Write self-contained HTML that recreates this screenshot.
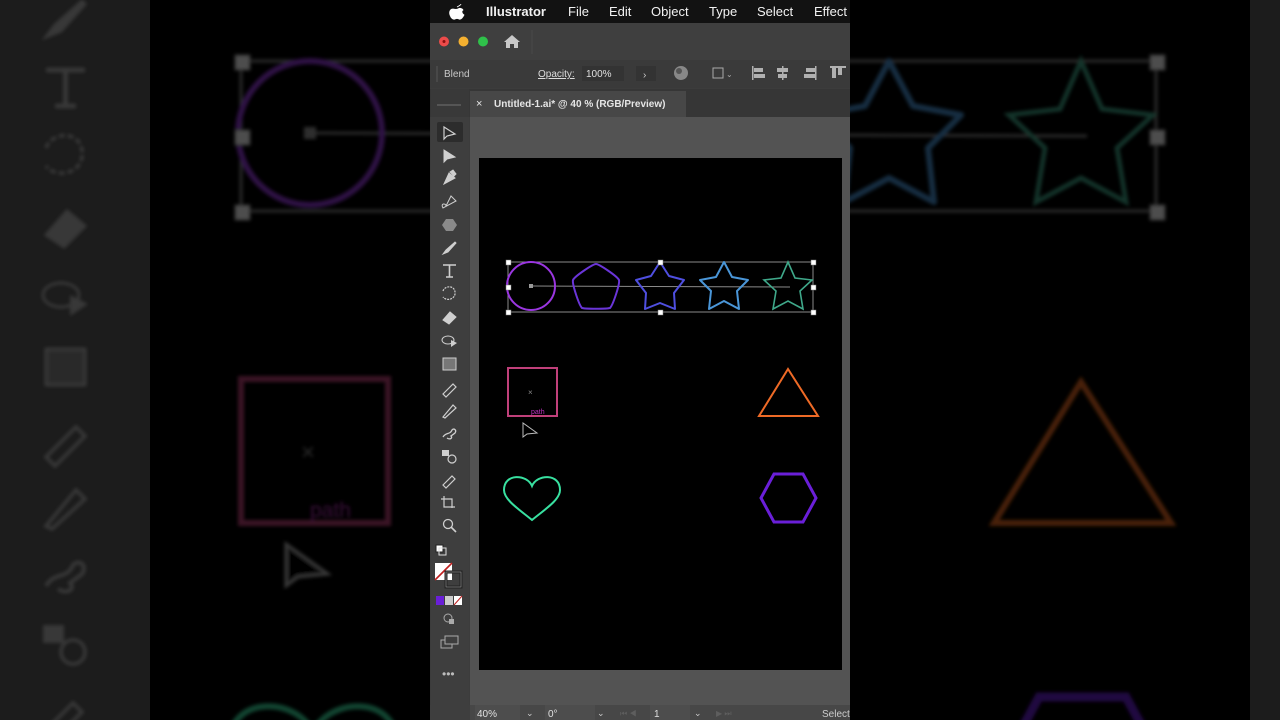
<!DOCTYPE html>
<html><head><meta charset="utf-8"><style>
html,body{margin:0;padding:0;background:#000;width:1280px;height:720px;overflow:hidden}
svg{display:block}
text{font-family:"Liberation Sans",sans-serif}
</style></head><body>
<svg width="1280" height="720" viewBox="0 0 1280 720" xmlns="http://www.w3.org/2000/svg">
<defs>
<filter id="bl" x="-10%" y="-10%" width="120%" height="120%"><feGaussianBlur stdDeviation="0.6"/></filter>
<g id="scene">
  <g stroke="#8a8a8a" stroke-width="1" fill="none">
    <rect x="508" y="262" width="305" height="50"/>
    <line x1="531" y1="286" x2="790" y2="287"/>
  </g>
  <rect x="529" y="284" width="4" height="4" fill="#9a9a9a"/>
  <circle cx="531" cy="286" r="24" fill="none" stroke="#9a36e0" stroke-width="2"/>
  <path transform="translate(596,288)" d="M0,-24 C3,-24 21,-12 23,-8 C24,-4 17,17 14,20 C10,21 -10,21 -14,20 C-17,17 -24,-4 -23,-8 C-21,-12 -3,-24 0,-24Z" fill="none" stroke="#6a35d8" stroke-width="2"/>
  <path transform="translate(660,287)" d="M0,-25 L9,-11 L24,-7 L14,6 L15,22 L0,16 L-15,22 L-14,6 L-24,-7 L-9,-11Z" fill="none" stroke="#4f4fe0" stroke-width="2" stroke-linejoin="round"/>
  <path transform="translate(724,287)" d="M0,-25 L8,-10 L24,-7 L13,4 L15,22 L0,14 L-15,22 L-13,4 L-24,-7 L-8,-10Z" fill="none" stroke="#4a96d8" stroke-width="2" stroke-linejoin="round"/>
  <path transform="translate(788,287)" d="M0,-25 L7,-9 L24,-7 L12,4 L15,22 L0,14 L-15,22 L-12,4 L-24,-7 L-7,-9Z" fill="none" stroke="#3fa88a" stroke-width="1.6"/>
  <rect x="508" y="368" width="49" height="48" fill="none" stroke="#c0407a" stroke-width="2"/>
  <text x="528" y="395" font-size="8" fill="#888">×</text>
  <text x="531" y="414" font-size="7" fill="#c030c0">path</text>
  <path d="M523,423 L523,437 L527,434 L537,433 Z" fill="#000" stroke="#bbb" stroke-width="1"/>
  <path d="M788,369 L818,416 L759,416 Z" fill="none" stroke="#ee6a26" stroke-width="2"/>
  <path d="M532,486 C527,474 504,473 504,490 C504,500 520,510 532,520 C544,510 560,500 560,490 C560,473 537,474 532,486 Z" fill="none" stroke="#38e0a0" stroke-width="2"/>
  <path d="M761,498 L774,474 L803,474 L816,498 L803,522 L774,522 Z" fill="none" stroke="#6a1fd8" stroke-width="3"/>
  <g fill="#fff" stroke="#777" stroke-width="0.5">
    <rect x="506" y="260" width="5" height="5"/><rect x="658" y="260" width="5" height="5"/><rect x="811" y="260" width="5" height="5"/>
    <rect x="506" y="285" width="5" height="5"/><rect x="811" y="285" width="5" height="5"/>
    <rect x="506" y="310" width="5" height="5"/><rect x="658" y="310" width="5" height="5"/><rect x="811" y="310" width="5" height="5"/>
  </g>
</g>
<g id="tools" fill="#cfcfcf" stroke="#cfcfcf">
  <path d="M444,127 L444,139 L447,136 L455,134 Z" fill="none" stroke-width="1.2"/>
  <path d="M444,150 L444,162 L447,159 L455,157 Z" stroke-width="1"/>
  <path d="M444,184 L449,173 L455,178 Z M450,172 L453,170 L456,174 L454,176Z" stroke-width="1"/>
  <path d="M443,208 C440,203 446,203 446,206 L451,196 L456,201 Z" stroke-width="1" fill="none"/>
  <path d="M442,225 L446,219 L453,219 L457,225 L453,231 L446,231 Z" stroke="none" fill="#8a8a8a"/>
  <path d="M443,254 L446,250 L455,242 L456,243 L448,252 Z" stroke-width="1"/>
  <path d="M443,265 L456,265 M449.5,265 L449.5,277 M446,277 L453,277" fill="none" stroke-width="1.6"/>
  <path d="M443,291 C445,285 456,285 455,294 C454,300 446,301 443,297" fill="none" stroke-width="1.2" stroke-dasharray="2 1"/>
  <path d="M443,320 L450,312 L456,317 L449,324 Z" stroke-width="1"/>
  <ellipse cx="448" cy="340" rx="6" ry="4" fill="none" stroke-width="1"/>
  <path d="M451,340 L451,347 L457,343Z" stroke="none"/>
  <rect x="443" y="358" width="13" height="12" fill="#777" stroke-width="1"/>
  <path d="M443,394 L453,384 L456,387 L446,397 Z" fill="none" stroke-width="1.2"/>
  <path d="M443,417 L453,405 L456,408 L445,418 Z" fill="none" stroke-width="1.2"/>
  <path d="M443,437 C446,432 450,435 452,430 C454,428 457,430 455,433 L451,436 C453,438 450,440 447,438" fill="none" stroke-width="1.3"/>
  <rect x="442" y="450" width="7" height="6" stroke="none"/><circle cx="452" cy="459" r="4" fill="none" stroke-width="1.2"/>
  <path d="M443,485 L452,476 L455,479 L446,488 Z" fill="none" stroke-width="1.2"/>
  <path d="M444,496 L444,507 L455,507 M441,499 L452,499 L452,508" fill="none" stroke-width="1.2"/>
  <circle cx="448" cy="524" r="4.5" fill="none" stroke-width="1.3"/><path d="M451,527 L456,532" stroke-width="1.6"/>
</g>
</defs>

<rect x="0" y="0" width="1280" height="720" fill="#000"/>
<rect x="0" y="0" width="150" height="720" fill="#1c1c1c"/>
<rect x="1250" y="0" width="30" height="720" fill="#1c1c1c"/>
<g transform="translate(-1283,-725) scale(3)" filter="url(#bl)">
  <use href="#scene" opacity="0.3"/>
  <use href="#tools" opacity="0.16"/>
</g>

<rect x="430" y="0" width="420" height="720" fill="#3c3c3c"/>
<rect x="430" y="0" width="420" height="23" fill="#121212"/>
<path d="M457,7 C459,6 461,5 461,4 M453,9 C450,9 449,12 450,15 C451,18 453,20 455,19 C456,18.5 458,18.5 459,19 C461,20 463,17 464,15 C462,14 461,11 463,10 C462,8 459,8 458,9 C457,9.5 455,9.5 453,9Z" fill="#fff" stroke="#fff" stroke-width="0.8"/>
<g font-size="13" fill="#f2f2f2">
<text x="486" y="16" font-weight="bold">Illustrator</text>
<text x="568" y="16">File</text>
<text x="609" y="16">Edit</text>
<text x="651" y="16">Object</text>
<text x="709" y="16">Type</text>
<text x="757" y="16">Select</text>
<text x="814" y="16">Effect</text>
</g>
<rect x="430" y="23" width="420" height="37" fill="#3f3f3f"/>
<circle cx="444" cy="41.5" r="5" fill="#ec4b4a"/><circle cx="444" cy="41.5" r="1.5" fill="#8a1010"/>
<circle cx="463.5" cy="41.5" r="5" fill="#f4b030"/>
<circle cx="483" cy="41.5" r="5" fill="#2fc14a"/>
<path d="M504,42 L512,35 L520,42 L518,42 L518,48 L514,48 L514,44 L510,44 L510,48 L506,48 L506,42Z" fill="#c8c8c8"/>
<line x1="532" y1="30" x2="532" y2="54" stroke="#4a4a4a"/>
<rect x="430" y="60" width="420" height="28" fill="#3a3a3a"/>
<line x1="437" y1="66" x2="437" y2="82" stroke="#555"/>
<text x="444" y="77" font-size="10" fill="#c8c8c8">Blend</text>
<text x="538" y="77" font-size="10" fill="#dcdcdc" text-decoration="underline">Opacity:</text>
<rect x="582" y="66" width="42" height="15" fill="#333"/>
<text x="586" y="77" font-size="10" fill="#e0e0e0">100%</text>
<rect x="636" y="66" width="20" height="15" fill="#333"/>
<text x="643" y="78" font-size="10" fill="#ccc">›</text>
<circle cx="681" cy="73" r="7" fill="#888"/><circle cx="679" cy="71" r="3" fill="#555"/>
<rect x="713" y="68" width="10" height="10" fill="none" stroke="#aaa"/><text x="726" y="77" font-size="8" fill="#aaa">⌄</text>
<g fill="#b0b0b0"><rect x="752" y="66" width="1.5" height="14"/><rect x="754" y="68" width="9" height="4"/><rect x="754" y="74" width="11" height="4"/>
<rect x="782" y="66" width="1.5" height="14"/><rect x="777" y="68" width="11" height="4"/><rect x="778" y="74" width="9" height="4"/>
<rect x="815" y="66" width="1.5" height="14"/><rect x="806" y="68" width="9" height="4"/><rect x="804" y="74" width="11" height="4"/>
<rect x="830" y="66" width="16" height="2"/><rect x="832" y="68" width="4" height="10"/><rect x="838" y="68" width="4" height="7"/></g>
<rect x="430" y="89" width="420" height="28" fill="#363636"/>
<rect x="470" y="91" width="216" height="26" fill="#474747"/>
<text x="434" y="98" font-size="7" fill="#aaa">››</text>
<text x="476" y="107" font-size="11" fill="#e6e6e6">×</text>
<text x="494" y="107" font-size="10" font-weight="bold" fill="#e6e6e6">Untitled-1.ai* @ 40 % (RGB/Preview)</text>
<rect x="431" y="117" width="38" height="588" fill="#3e3e3e"/>
<rect x="431" y="89" width="38" height="28" fill="#393939"/>
<rect x="437" y="104" width="24" height="2" fill="#555"/>
<rect x="437" y="122" width="26" height="20" rx="2" fill="#2c2c2c"/>
<use href="#tools"/>
<rect x="436" y="545" width="7" height="7" fill="#fff" stroke="#222"/><rect x="439" y="548" width="7" height="7" fill="none" stroke="#ddd"/>
<rect x="435" y="563" width="17" height="17" fill="#fff"/><line x1="435" y1="580" x2="452" y2="563" stroke="#c02020" stroke-width="1.6"/>
<rect x="446" y="572" width="15" height="15" fill="none" stroke="#222" stroke-width="3"/><rect x="446" y="572" width="15" height="15" fill="none" stroke="#999" stroke-width="0.6"/>
<rect x="436" y="596" width="8" height="9" fill="#6a1fd8"/><rect x="445" y="596" width="8" height="9" fill="#ccc"/><rect x="454" y="596" width="8" height="9" fill="#fff"/><line x1="454" y1="605" x2="462" y2="596" stroke="#c02020"/>
<circle cx="448" cy="618" r="4" fill="none" stroke="#aaa"/><rect x="449" y="619" width="5" height="5" fill="#aaa"/>
<rect x="441" y="640" width="11" height="8" fill="none" stroke="#aaa"/><rect x="445" y="636" width="13" height="8" fill="#3e3e3e" stroke="#aaa"/>
<text x="442" y="678" font-size="12" fill="#bbb">•••</text>
<rect x="470" y="117" width="380" height="588" fill="#535353"/>
<rect x="479" y="158" width="363" height="512" fill="#000"/>
<use href="#scene"/>
<rect x="470" y="705" width="380" height="15" fill="#474747"/>
<rect x="430" y="705" width="40" height="15" fill="#3e3e3e"/>
<rect x="475" y="705" width="45" height="15" fill="#4d4d4d"/>
<text x="477" y="717" font-size="10" fill="#e0e0e0">40%</text>
<text x="526" y="716" font-size="9" fill="#ccc">⌄</text>
<rect x="545" y="705" width="50" height="15" fill="#4d4d4d"/>
<text x="548" y="717" font-size="10" fill="#e0e0e0">0°</text>
<text x="597" y="716" font-size="9" fill="#ccc">⌄</text>
<text x="620" y="716" font-size="8" fill="#5e5e5e">⏮ ◀</text>
<rect x="650" y="705" width="40" height="15" fill="#4d4d4d"/>
<text x="654" y="717" font-size="10" fill="#e0e0e0">1</text>
<text x="694" y="716" font-size="9" fill="#ccc">⌄</text>
<text x="716" y="716" font-size="8" fill="#5e5e5e">▶ ⏭</text>
<text x="822" y="717" font-size="10" fill="#ccc">Select</text>
</svg>
</body></html>
